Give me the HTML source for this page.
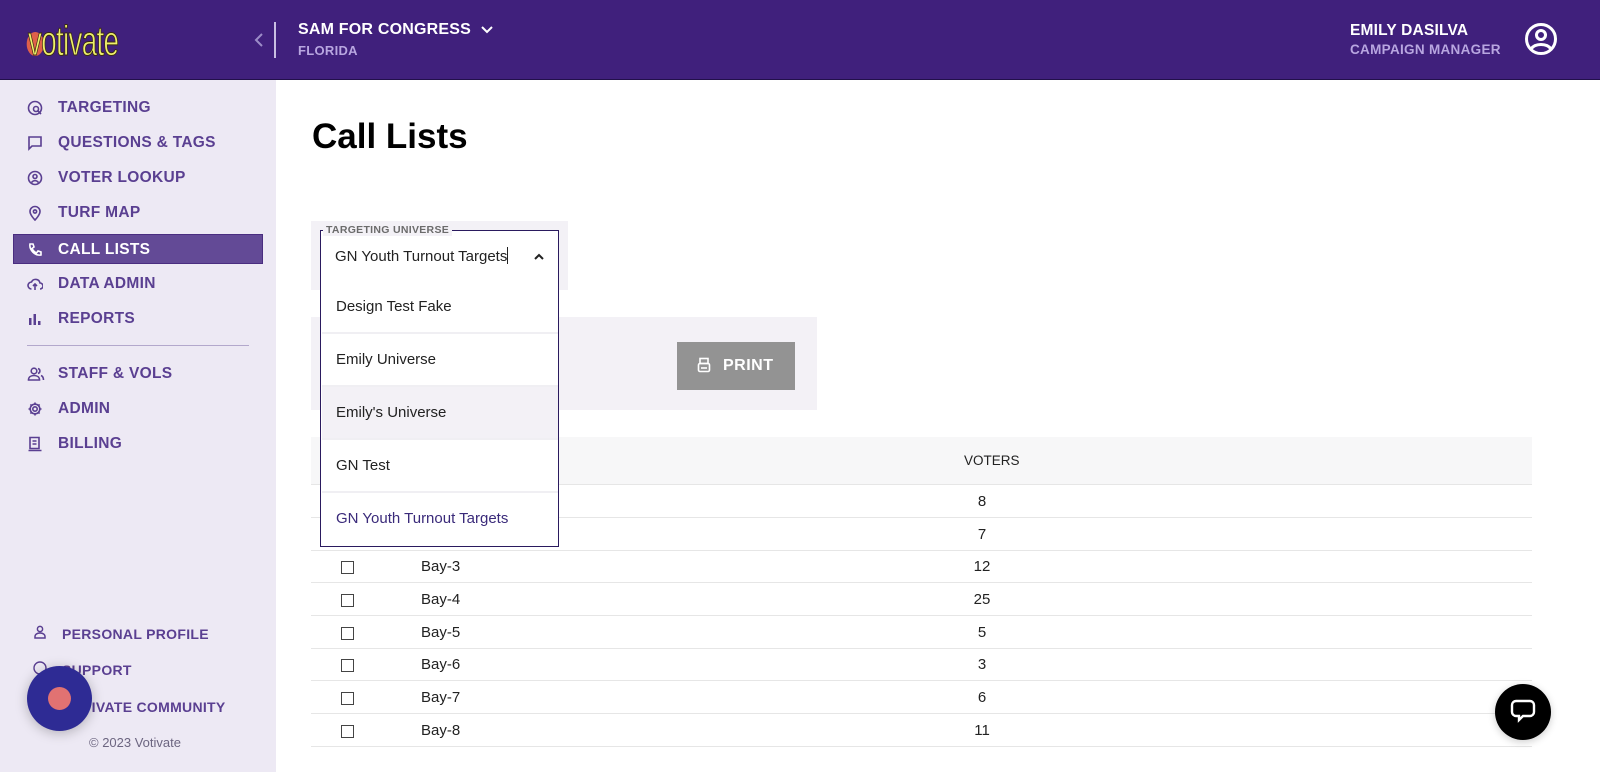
<!DOCTYPE html>
<html><head><meta charset="utf-8"><style>
*{box-sizing:border-box;margin:0;padding:0}
body{width:1600px;height:772px;overflow:hidden;font-family:"Liberation Sans",sans-serif;background:#fff;position:relative}
.top{position:absolute;left:0;top:0;width:1600px;height:80px;background:#40207c;border-bottom:1px solid #22104a}
.logo{position:absolute;left:28px;top:17px;font-family:"Liberation Sans Narrow","Liberation Sans",sans-serif;font-size:42px;color:#eef06a;letter-spacing:-1px;transform:scaleX(.66);transform-origin:left;-webkit-text-stroke:1px #3a2a10}
.logo:before{content:"";position:absolute;left:-2px;top:15px;width:26px;height:24px;border-radius:50%;background:#e0604a;z-index:-1}
.b{font-weight:bold}
.side{position:absolute;left:0;top:80px;width:276px;height:692px;background:#ede9f4}
.nav{position:absolute;left:0;width:276px;height:30px;font-weight:bold;font-size:15.5px;color:#5a3f91;letter-spacing:.3px;line-height:30px}
.nav span{position:absolute;left:58px}
.nav svg{position:absolute;left:27px;top:7px}
.act{left:13px;width:250px;background:#634a96;border:1px solid #4a2d80;color:#fff}
.act span{left:44px}.act svg{left:13px}
.bnav{position:absolute;font-weight:bold;font-size:14px;color:#5a3f91;letter-spacing:.3px}
h1{position:absolute;left:312px;top:117px;font-size:35px;font-weight:bold;color:#000}
.row{position:absolute;left:311px;width:1221px;height:33px;border-bottom:1px solid #e6e6e6;font-size:15px;color:#222}
.row .cb{position:absolute;left:30px;top:11px;width:13px;height:13px;border:1px solid #444}
.row .n{position:absolute;left:110px;top:8px}
.row .v{position:absolute;left:671px;width:0;top:8px;text-align:center;display:flex;justify-content:center}
.opt{position:absolute;left:1px;width:236px;height:53px;border-bottom:2px solid #f0eff3;font-size:15px;color:#222;padding:17px 0 0 14px}
</style></head><body>
<div class="top">
<div class="logo">votivate</div>
<svg style="position:absolute;left:253px;top:32px" width="12" height="16"><path d="M9 2 L3 8 L9 14" stroke="#9c8cc8" stroke-width="2" fill="none"/></svg>
<div style="position:absolute;left:274px;top:22px;width:2px;height:36px;background:#c9bfe2"></div>
<div class="b" style="position:absolute;left:298px;top:21px;color:#fff;font-size:16px;letter-spacing:.2px">SAM FOR CONGRESS</div>
<svg style="position:absolute;left:480px;top:25px" width="14" height="10"><path d="M2 2 L7 7 L12 2" stroke="#fff" stroke-width="2" fill="none"/></svg>
<div class="b" style="position:absolute;left:298px;top:43px;color:#b8a6e0;font-size:13px;letter-spacing:.3px">FLORIDA</div>
<div class="b" style="position:absolute;left:1350px;top:22px;color:#fff;font-size:15.5px;letter-spacing:.2px">EMILY DASILVA</div>
<div class="b" style="position:absolute;left:1350px;top:42px;color:#b8a6e0;font-size:13.5px;letter-spacing:.3px">CAMPAIGN MANAGER</div>
<svg style="position:absolute;left:1524px;top:22px" width="34" height="34" viewBox="0 0 34 34" fill="none" stroke="#fff" stroke-width="3"><circle cx="17" cy="17" r="14.5"/><circle cx="17" cy="13" r="4.5"/><path d="M7 27 C11 21 23 21 27 27"/></svg>
</div>
<div class="side">
<div class="nav" style="top:13px"><svg width="16" height="16" viewBox="0 0 16 16" fill="none" stroke="#5a3f91" stroke-width="1.6"><circle cx="8" cy="8" r="6.5"/><circle cx="9" cy="9" r="2.5"/><path d="M11 11l3 3"/></svg><span>TARGETING</span></div>
<div class="nav" style="top:48px"><svg width="16" height="16" viewBox="0 0 16 16" fill="none" stroke="#5a3f91" stroke-width="1.6"><path d="M2 2h12v9H5l-3 3z"/></svg><span>QUESTIONS &amp; TAGS</span></div>
<div class="nav" style="top:83px"><svg width="16" height="16" viewBox="0 0 16 16" fill="none" stroke="#5a3f91" stroke-width="1.6"><circle cx="8" cy="8" r="6.5"/><circle cx="8" cy="6.5" r="2"/><path d="M4.5 12.5c2-2.5 5-2.5 7 0"/></svg><span>VOTER LOOKUP</span></div>
<div class="nav" style="top:118px"><svg width="16" height="16" viewBox="0 0 16 16" fill="none" stroke="#5a3f91" stroke-width="1.6"><path d="M8 15s-5-5-5-8.5a5 5 0 0110 0C13 10 8 15 8 15z"/><circle cx="8" cy="6.5" r="1.6"/></svg><span>TURF MAP</span></div>
<div class="nav act" style="top:154px"><svg width="16" height="16" viewBox="0 0 16 16" fill="none" stroke="#fff" stroke-width="1.6"><path d="M3 2l3 0 1 3-2 1.5c1 2 2.5 3.5 4.5 4.5L11 9l3 1v3c-6 1-12-5-11-11z"/></svg><span>CALL LISTS</span></div>
<div class="nav" style="top:189px"><svg width="16" height="16" viewBox="0 0 16 16" fill="none" stroke="#5a3f91" stroke-width="1.6"><path d="M4.5 13a3.5 3.5 0 010-7 4.5 4.5 0 018.5 1 3 3 0 010 6M8 14V8M6 10l2-2 2 2"/></svg><span>DATA ADMIN</span></div>
<div class="nav" style="top:224px"><svg width="16" height="16" viewBox="0 0 16 16" fill="#5a3f91"><rect x="2" y="7" width="2.5" height="7"/><rect x="6.5" y="3" width="2.5" height="11"/><rect x="11" y="10" width="2.5" height="4"/></svg><span>REPORTS</span></div>
<div style="position:absolute;left:27px;top:265px;width:222px;height:1px;background:#b3a8cc"></div>
<div class="nav" style="top:279px"><svg width="18" height="16" viewBox="0 0 18 16" fill="none" stroke="#5a3f91" stroke-width="1.6"><circle cx="7" cy="5" r="2.8"/><path d="M1.5 14c0-3 2.5-4.5 5.5-4.5s5.5 1.5 5.5 4.5zM11 2.5a2.6 2.6 0 010 5M14 9.5c1.5.6 2.5 2 2.5 4.5"/></svg><span>STAFF &amp; VOLS</span></div>
<div class="nav" style="top:314px"><svg width="16" height="16" viewBox="0 0 16 16" fill="none" stroke="#5a3f91" stroke-width="1.6"><circle cx="8" cy="8" r="2.2"/><path d="M8 1.5v2M8 12.5v2M1.5 8h2M12.5 8h2M3.4 3.4l1.4 1.4M11.2 11.2l1.4 1.4M3.4 12.6l1.4-1.4M11.2 4.8l1.4-1.4"/><circle cx="8" cy="8" r="4.8"/></svg><span>ADMIN</span></div>
<div class="nav" style="top:349px"><svg width="16" height="16" viewBox="0 0 16 16" fill="none" stroke="#5a3f91" stroke-width="1.6"><path d="M3 1.5h9v11H3zM1.5 14.5h13M5.5 5h4M5.5 8h4"/></svg><span>BILLING</span></div>
<svg style="position:absolute;left:33px;top:545px" width="14" height="14" viewBox="0 0 14 14" fill="none" stroke="#5a3f91" stroke-width="1.5"><circle cx="7" cy="4" r="2.6"/><path d="M2 13v-1.5c0-2 2-3.5 5-3.5s5 1.5 5 3.5V13z"/></svg>
<div class="bnav" style="left:62px;top:546px">PERSONAL PROFILE</div>
<svg style="position:absolute;left:33px;top:581px" width="14" height="14" viewBox="0 0 14 14" fill="none" stroke="#5a3f91" stroke-width="1.4"><circle cx="7" cy="7" r="6"/></svg>
<div class="bnav" style="left:62px;top:582px">SUPPORT</div>
<div class="bnav" style="left:62px;top:619px">VOTIVATE COMMUNITY</div>
<div style="position:absolute;left:89px;top:655px;font-size:13px;color:#6c6580">© 2023 Votivate</div>
<div style="position:absolute;left:27px;top:586px;width:65px;height:65px;border-radius:50%;background:#2e2b94;box-shadow:0 2px 12px rgba(0,0,0,.25)"><div style="position:absolute;left:21px;top:21px;width:23px;height:23px;border-radius:50%;background:#e17272"></div></div>
</div>
<h1>Call Lists</h1>
<div style="position:absolute;left:311px;top:221px;width:257px;height:69px;background:#f3f1f6"></div>
<div style="position:absolute;left:311px;top:317px;width:506px;height:93px;background:#f3f1f6"></div>
<div class="b" style="position:absolute;left:677px;top:342px;width:118px;height:48px;background:#939393;color:#fff;font-size:16px;letter-spacing:.5px;padding:15px 0 0 46px">PRINT</div>
<svg style="position:absolute;left:697px;top:357px" width="14" height="16" viewBox="0 0 14 16" fill="none" stroke="#fff" stroke-width="1.6"><rect x="3" y="1.5" width="8" height="5"/><rect x="1.5" y="6.5" width="11" height="8" rx="1.5"/><path d="M4 11h6"/></svg>
<div style="position:absolute;left:311px;top:437px;width:1221px;height:48px;background:#f7f7f8;border-bottom:1px solid #e6e6e6"></div>
<div style="position:absolute;left:964px;top:453px;font-size:13.5px;color:#222">VOTERS</div>
<div class="row" style="top:485px"><div class="v">8</div></div>
<div class="row" style="top:518px"><div class="v">7</div></div>
<div class="row" style="top:550px"><div class="cb"></div><div class="n">Bay-3</div><div class="v">12</div></div>
<div class="row" style="top:583px"><div class="cb"></div><div class="n">Bay-4</div><div class="v">25</div></div>
<div class="row" style="top:616px"><div class="cb"></div><div class="n">Bay-5</div><div class="v">5</div></div>
<div class="row" style="top:648px"><div class="cb"></div><div class="n">Bay-6</div><div class="v">3</div></div>
<div class="row" style="top:681px"><div class="cb"></div><div class="n">Bay-7</div><div class="v">6</div></div>
<div class="row" style="top:714px"><div class="cb"></div><div class="n">Bay-8</div><div class="v">11</div></div>
<div style="position:absolute;left:320px;top:230px;width:239px;height:317px;border:1px solid #2a1a5e;background:#fff">
<div style="position:absolute;left:2px;top:-7px;background:#f3f1f6;padding:0 3px;font-size:10.5px;font-weight:bold;color:#6b6b6b;letter-spacing:.3px">TARGETING UNIVERSE</div>
<div style="position:absolute;left:14px;top:16px;font-size:15px;color:#222">GN Youth Turnout Targets<span style="display:inline-block;width:1px;height:17px;background:#222;vertical-align:-3px"></span></div>
<svg style="position:absolute;left:212px;top:21px" width="12" height="9"><path d="M2 7 L6 3 L10 7" stroke="#222" stroke-width="2" fill="none"/></svg>
<div class="opt" style="top:50px">Design Test Fake</div>
<div class="opt" style="top:103px">Emily Universe</div>
<div class="opt" style="top:156px;background:#f3f1f6">Emily's Universe</div>
<div class="opt" style="top:209px">GN Test</div>
<div class="opt" style="top:262px;color:#3a2a7a;border:none">GN Youth Turnout Targets</div>
</div>
<div style="position:absolute;left:1495px;top:684px;width:56px;height:56px;border-radius:50%;background:#000;box-shadow:0 2px 8px rgba(0,0,0,.2)"></div>
<svg style="position:absolute;left:1509px;top:697px" width="28" height="28" viewBox="0 0 28 28" fill="none" stroke="#fff" stroke-width="2.4"><path d="M7 4h14a4 4 0 014 4v7a4 4 0 01-4 4h-7l-4 4v-4H7a4 4 0 01-4-4V8a4 4 0 014-4z"/></svg>
</body></html>
